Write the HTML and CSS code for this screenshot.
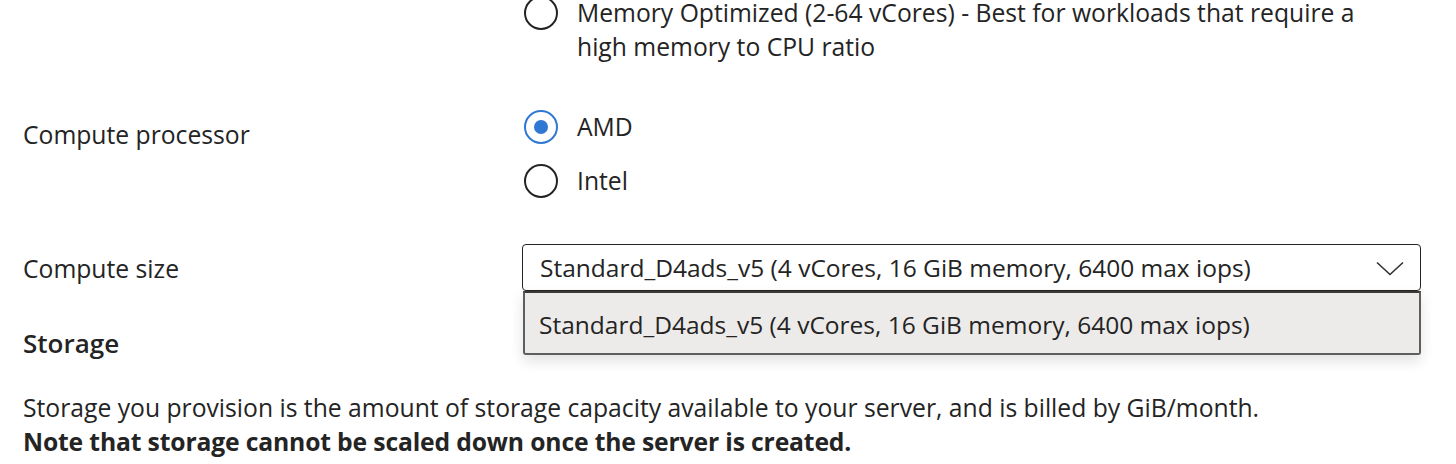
FILE: index.html
```html
<!DOCTYPE html>
<html>
<head>
<meta charset="utf-8">
<link rel="stylesheet" href="styles.css">
</head>
<body>
<div class="page">
  <div class="form">
    <div class="label"></div>
    <div class="control">
      <div class="option">
        <span class="radio"></span>
        <span class="opt-text">Memory Optimized (2-64 vCores) - Best for workloads that require a<br>high memory to CPU ratio</span>
      </div>
    </div>

    <div class="label row-gap">Compute processor</div>
    <div class="control row-gap">
      <div class="options">
        <div class="option">
          <span class="radio checked"></span>
          <span class="opt-text">AMD</span>
        </div>
        <div class="option">
          <span class="radio"></span>
          <span class="opt-text">Intel</span>
        </div>
      </div>
    </div>

    <div class="label row-gap">Compute size</div>
    <div class="control row-gap">
      <div class="select">
        <span class="select-text">Standard_D4ads_v5 (4 vCores, 16 GiB memory, 6400 max iops)</span>
        <svg class="chevron" width="28" height="15" viewBox="0 0 28 15"><polyline points="1,1.5 14,13.5 27,1.5" fill="none" stroke="#323130" stroke-width="1.6"/></svg>
        <div class="listbox">
          <div class="list-item">Standard_D4ads_v5 (4 vCores, 16 GiB memory, 6400 max iops)</div>
        </div>
      </div>
    </div>
  </div>

  <h2 class="heading">Storage</h2>
  <p class="desc">Storage you provision is the amount of storage capacity available to your server, and is billed by GiB/month.<br><strong>Note that storage cannot be scaled down once the server is created.</strong></p>
</div>
</body>
</html>
```

FILE: styles.css
```css
html, body {
  margin: 0;
  padding: 0;
  background: #ffffff;
}
body {
  font-family: "Open Sans", "Noto Sans", sans-serif;
  font-size: 24.7px;
  line-height: 34px;
  color: #242424;
}
.page {
  padding-left: 23px;
  margin-top: -4px;
}
.form {
  display: grid;
  grid-template-columns: 499px 899px;
}
.label {
  padding-top: 8px;
}
.row-gap {
  margin-top: 46px;
}
.control {
  position: relative;
}
.options {
  display: flex;
  flex-direction: column;
  gap: 20px;
}
.option {
  display: flex;
  align-items: flex-start;
  gap: 19px;
  margin-left: 2px;
}
.radio {
  flex: none;
  width: 34px;
  height: 34px;
  box-sizing: border-box;
  border: 2px solid #242424;
  border-radius: 50%;
  display: flex;
  align-items: center;
  justify-content: center;
}
.radio.checked {
  border-color: #2f78d4;
}
.radio.checked::after {
  content: "";
  width: 14px;
  height: 14px;
  border-radius: 50%;
  background: #2f78d4;
}
.select {
  position: relative;
  height: 47px;
  box-sizing: border-box;
  border: 1.5px solid #242424;
  border-radius: 4px;
  display: flex;
  align-items: center;
  justify-content: space-between;
  padding: 0 16px 0 17px;
  font-size: 24.5px;
}
.select-text {
  white-space: nowrap;
}
.chevron {
  display: block;
  margin-top: 1px;
}
.listbox {
  position: absolute;
  left: 0;
  right: -1px;
  top: 46px;
  height: 64px;
  box-sizing: border-box;
  background: #edebe9;
  border: 2px solid #605e5c;
  border-top-color: #3b3a39;
  border-radius: 0 0 3px 3px;
  box-shadow: 0 6px 14px rgba(0,0,0,0.12);
  display: flex;
  align-items: center;
  padding-left: 14px;
  z-index: 2;
}
.list-item {
  white-space: nowrap;
  margin-top: 3px;
}
.heading {
  margin: 35px 0 0 0;
  font-size: 26px;
  line-height: 34px;
  font-weight: 600;
}
.desc {
  margin: 31px 0 0 0;
}
.desc strong {
  font-weight: 700;
  letter-spacing: -0.15px;
}
```
